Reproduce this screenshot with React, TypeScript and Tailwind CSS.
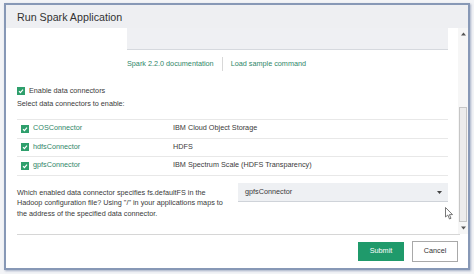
const connectors = [
  { name: "COSConnector", desc: "IBM Cloud Object Storage" },
  { name: "hdfsConnector", desc: "HDFS" },
  { name: "gpfsConnector", desc: "IBM Spectrum Scale (HDFS Transparency)" },
];

const Check = () => (
  <span className="w-[8px] h-[8px] bg-[#2e9f6c] flex items-center justify-center shrink-0">
    <svg width="6" height="6" viewBox="0 0 6 6">
      <path d="M1 3.2 L2.4 4.6 L5 1.6" stroke="white" strokeWidth="1.2" fill="none" />
    </svg>
  </span>
);

const ScrollBar = () => {
  return (
    <div className="w-[10px] bg-[#f6f6f6] flex flex-col items-center">
      <svg width="5" height="4" viewBox="0 0 5 4" className="mt-[4px]">
        <path d="M0 3.5 L2.5 0.5 L5 3.5 Z" fill="#555" />
      </svg>
      <div className="mt-[71px] w-[8px] h-[115px] bg-[#ececec] border border-[#c6c6c6]" />
      <svg width="5" height="4" viewBox="0 0 5 4" className="mt-[4px]">
        <path d="M0 0.5 L2.5 3.5 L5 0.5 Z" fill="#555" />
      </svg>
    </div>
  );
};

const Content = () => {
  return (
    <div className="flex-1 overflow-hidden pl-[11px] pr-[10px] text-[7.25px] text-[#3a3a3a]">
      <div className="ml-[110px] h-[22px] bg-[#eff0f3] border-b border-[#d6d9de]" />
      <div className="ml-[110px] mt-[7px] h-[14px] flex items-center text-[#2f8769]">
        <span>Spark 2.2.0 documentation</span>
        <span className="w-px h-[14px] bg-[#d8d8d8] mx-[8px]" />
        <span>Load sample command</span>
      </div>
      <div className="mt-[15px] h-[10px] flex items-center gap-[4px]">
        <Check />
        <span>Enable data connectors</span>
      </div>
      <div className="mt-[3px] h-[10px] flex items-center">Select data connectors to enable:</div>
      <div className="mt-[10px] border-b border-[#e8e8e8]">
        {connectors.map((c) => (
          <div key={c.name} className="h-[18.5px] border-t border-[#e8e8e8] flex items-center">
            <div className="w-[156px] pl-[4px] flex items-center gap-[4px] text-[#2f8769]">
              <Check />
              <span>{c.name}</span>
            </div>
            <span>{c.desc}</span>
          </div>
        ))}
      </div>
      <div className="flex items-start">
        <div className="w-[221px] shrink-0">
          <p className="w-[210px] mt-[12px] leading-[10.5px]">
            Which enabled data connector specifies fs.defaultFS in the Hadoop configuration file? Using "/" in your applications maps to the address of the specified data connector.
          </p>
        </div>
        <div className="flex-1 mt-[7.5px] h-[19px] bg-[#eef0f3] border-b border-[#cfd3d9] flex items-center justify-between pl-[7px] pr-[6px]">
          <span>gpfsConnector</span>
          <svg width="5" height="3" viewBox="0 0 5 3">
            <path d="M0 0 L2.5 3 L5 0 Z" fill="#444" />
          </svg>
        </div>
      </div>
    </div>
  );
};

const App = () => {
  return (
    <div className="w-[474px] h-[274px] bg-[#f3f4f7] pt-[3px] pl-[4px] pr-[4px] pb-[4px] font-['Liberation_Sans',Arial,sans-serif]">
      <div className="h-full flex flex-col border-2 border-[#8798b6] bg-white relative shadow-[1px_1px_2px_rgba(90,110,150,0.5)]">
        <div className="h-[23px] bg-[#eeeff2] flex items-center pl-[11px] pt-[2px] text-[10.7px] text-[#333]">
          Run Spark Application
        </div>
        <div className="h-[206px] flex">
          <Content />
          <ScrollBar />
        </div>
        <div className="flex-1 ml-[11px] mr-[8px] border-t border-[#d6d6d6] flex items-center justify-end gap-[8px] pr-[2px] text-[7.25px]">
          <button className="w-[46px] h-[19px] bg-[#1f9a6b] text-white">Submit</button>
          <button className="w-[46px] h-[21px] bg-white border border-[#a9a9a9] text-[#333]">Cancel</button>
        </div>
        <svg width="9" height="13" viewBox="0 0 9 13" className="absolute left-[439px] top-[202px]">
          <path d="M0.5 0.5 L0.5 10 L2.8 8 L4.5 12 L6 11.3 L4.4 7.6 L7.5 7.6 Z" fill="white" stroke="#555" strokeWidth="0.8" />
        </svg>
      </div>
    </div>
  );
};

export default App;
